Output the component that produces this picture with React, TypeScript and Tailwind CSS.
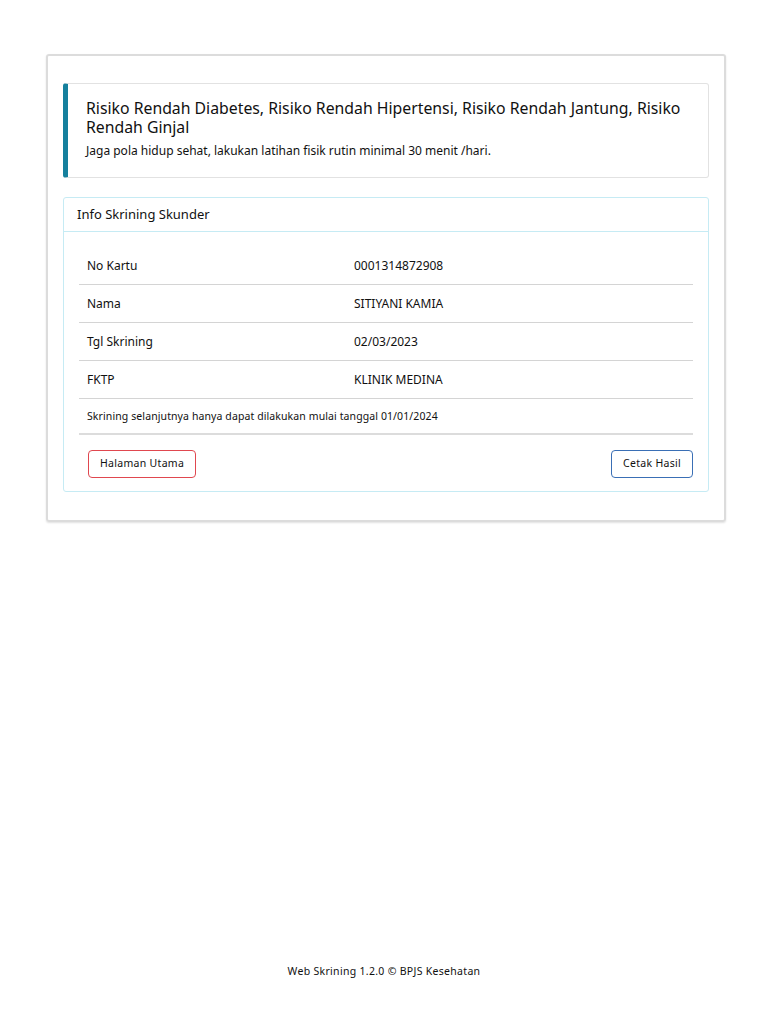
export default function App() {
  const rows = [
    { label: "No Kartu", value: "0001314872908" },
    { label: "Nama", value: "SITIYANI KAMIA" },
    { label: "Tgl Skrining", value: "02/03/2023" },
    { label: "FKTP", value: "KLINIK MEDINA" },
  ];

  return (
    <div
      className="flex min-h-[1024px] flex-col bg-white text-[#111]"
      style={{ fontFamily: "'Noto Sans', Lato, sans-serif" }}
    >
      <div className="pl-[46px] pr-[42px] pt-[54px]">
        {/* Outer card */}
        <div className="rounded-[3px] border-2 border-[#dcdcdc] px-[15px] pb-[28px] pt-[27px] shadow-[0_1px_2px_rgba(0,0,0,0.12)]">
          {/* Alert */}
          <div className="rounded-[3px] border border-[#e2e2e2] border-l-[5px] border-l-[#15809d] pb-[19px] pl-[18px] pr-4 pt-[15px]">
            <h2 className="text-[15.8px] leading-[19px]">
              Risiko Rendah Diabetes, Risiko Rendah Hipertensi, Risiko Rendah
              Jantung, Risiko Rendah Ginjal
            </h2>
            <p className="mt-[6px] text-[12px] leading-[15px]">
              Jaga pola hidup sehat, lakukan latihan fisik rutin minimal 30
              menit /hari.
            </p>
          </div>

          {/* Info card */}
          <div className="mt-[19px] rounded-[3px] border border-[#c6ebf4]">
            <div className="border-b border-[#c6ebf4] px-[13px] py-[8px] text-[13px] leading-[17px]">
              Info Skrining Skunder
            </div>
            <div className="px-[15px] pb-[13px] pt-[15px]">
              <div>
                {rows.map((r) => (
                  <div
                    key={r.label}
                    className="grid grid-cols-[267px_1fr] border-b border-[#d4d4d4] py-[10px] pl-[8px] text-[12px] leading-[17px]"
                  >
                    <span>{r.label}</span>
                    <span>{r.value}</span>
                  </div>
                ))}
                <div className="border-b-2 border-[#dcdcdc] py-[9px] pl-[8px] text-[10.5px] leading-[16px] tracking-[0.1px]">
                  Skrining selanjutnya hanya dapat dilakukan mulai tanggal
                  01/01/2024
                </div>
              </div>
              <div className="mt-[15px] flex items-center justify-between pl-[9px]">
                <button className="h-[28px] rounded-[4px] border border-[#e0474f] px-[11px] text-[10.5px] tracking-[0.3px]">
                  Halaman Utama
                </button>
                <button className="h-[28px] rounded-[4px] border border-[#3a6fb5] px-[11px] text-[10.5px] tracking-[0.3px]">
                  Cetak Hasil
                </button>
              </div>
            </div>
          </div>
        </div>
      </div>

      <div className="flex-1" />
      <footer className="pb-[46px] text-center text-[10.5px] leading-[14px] tracking-[0.3px]">
        Web Skrining 1.2.0 © BPJS Kesehatan
      </footer>
    </div>
  );
}
